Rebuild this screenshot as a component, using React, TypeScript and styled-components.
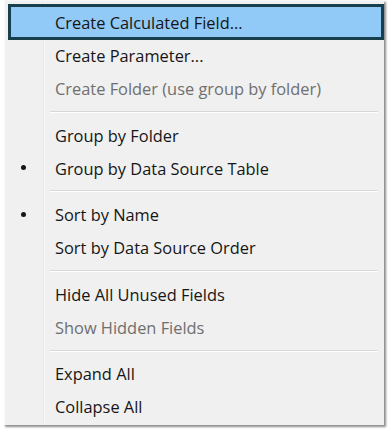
import React from "react";
import styled, { createGlobalStyle } from "styled-components";

const Global = createGlobalStyle`
  html, body { margin: 0; padding: 0; background: #ffffff; }
  body { width: 388px; height: 433px; overflow: hidden; }
`;

const Frame = styled.div`
  width: 388px;
  height: 433px;
  padding: 0 0 0 3px;
  box-sizing: border-box;
  background: #ffffff;
`;

const Menu = styled.div`
  position: relative;
  width: 381px;
  height: 425px;
  box-sizing: border-box;
  background: #f0f0f0;
  border-left: 2px solid #fbfbfb;
  border-top: 1px solid #f6f6f6;
  box-shadow: 2px 2px 2px rgba(0, 0, 0, 0.45);
  padding: 3px 0 0 3px;
  display: flex;
  flex-direction: column;
  font-family: "Open Sans", "Noto Sans", sans-serif;
  font-size: 16.4px;
`;

const Gutter = styled.div`
  position: absolute;
  top: 0;
  bottom: 0;
  left: 38px;
  width: 1px;
  background: #e6e6e6;
  border-right: 1px solid #fafafa;
`;

const Item = styled.div<{ $active?: boolean; $disabled?: boolean }>`
  position: relative;
  height: ${(p) => (p.$active ? "36px" : "33px")};
  margin-bottom: ${(p) => (p.$active ? "-1px" : "0")};
  box-sizing: border-box;
  display: flex;
  align-items: center;
  padding-left: ${(p) => (p.$active ? "44px" : "47px")};
  color: ${(p) => (p.$disabled ? "#6f6f6f" : "#161616")};
  background: ${(p) => (p.$active ? "#91c9f7" : "transparent")};
  border: ${(p) => (p.$active ? "3px solid #173f4d" : "none")};
  margin-right: ${(p) => (p.$active ? "0" : "3px")};
  z-index: 1;
  white-space: nowrap;
`;

const Bullet = styled.span`
  position: absolute;
  left: 13px;
  top: 50%;
  width: 5px;
  height: 5px;
  margin-top: -3px;
  border-radius: 50%;
  background: #161616;
`;

const Separator = styled.div`
  height: 13.6px;
  display: flex;
  align-items: center;
  padding-left: 42px;
  padding-right: 6px;
  &::after {
    content: "";
    flex: 1;
    height: 1px;
    background: #d7d7d7;
    border-bottom: 1px solid #ffffff;
  }
`;

type Entry =
  | { kind: "item"; label: string; active?: boolean; disabled?: boolean; checked?: boolean }
  | { kind: "sep" };

const entries: Entry[] = [
  { kind: "item", label: "Create Calculated Field...", active: true },
  { kind: "item", label: "Create Parameter..." },
  { kind: "item", label: "Create Folder (use group by folder)", disabled: true },
  { kind: "sep" },
  { kind: "item", label: "Group by Folder" },
  { kind: "item", label: "Group by Data Source Table", checked: true },
  { kind: "sep" },
  { kind: "item", label: "Sort by Name", checked: true },
  { kind: "item", label: "Sort by Data Source Order" },
  { kind: "sep" },
  { kind: "item", label: "Hide All Unused Fields" },
  { kind: "item", label: "Show Hidden Fields", disabled: true },
  { kind: "sep" },
  { kind: "item", label: "Expand All" },
  { kind: "item", label: "Collapse All" },
];

export default function App() {
  return (
    <>
      <Global />
      <Frame>
        <Menu>
          <Gutter />
          {entries.map((e, i) =>
            e.kind === "sep" ? (
              <Separator key={i} />
            ) : (
              <Item key={i} $active={e.active} $disabled={e.disabled}>
                {e.checked && <Bullet />}
                {e.label}
              </Item>
            )
          )}
        </Menu>
      </Frame>
    </>
  );
}
